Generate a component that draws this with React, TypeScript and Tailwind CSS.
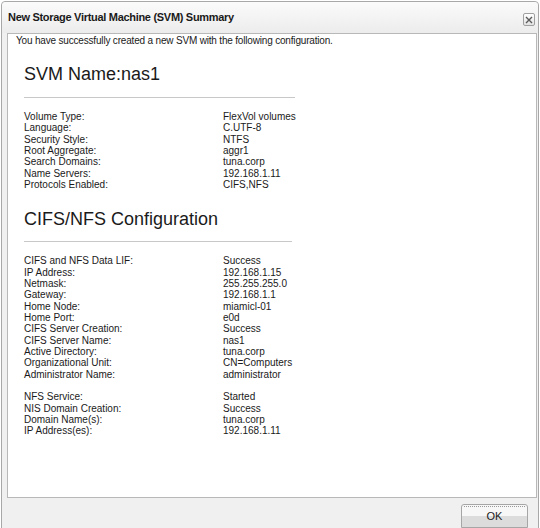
import React from "react";

const sec1: [string, string][] = [
  ["Volume Type:", "FlexVol volumes"],
  ["Language:", "C.UTF-8"],
  ["Security Style:", "NTFS"],
  ["Root Aggregate:", "aggr1"],
  ["Search Domains:", "tuna.corp"],
  ["Name Servers:", "192.168.1.11"],
  ["Protocols Enabled:", "CIFS,NFS"],
];

const sec2: [string, string][] = [
  ["CIFS and NFS Data LIF:", "Success"],
  ["IP Address:", "192.168.1.15"],
  ["Netmask:", "255.255.255.0"],
  ["Gateway:", "192.168.1.1"],
  ["Home Node:", "miamicl-01"],
  ["Home Port:", "e0d"],
  ["CIFS Server Creation:", "Success"],
  ["CIFS Server Name:", "nas1"],
  ["Active Directory:", "tuna.corp"],
  ["Organizational Unit:", "CN=Computers"],
  ["Administrator Name:", "administrator"],
  ["", ""],
  ["NFS Service:", "Started"],
  ["NIS Domain Creation:", "Success"],
  ["Domain Name(s):", "tuna.corp"],
  ["IP Address(es):", "192.168.1.11"],
];

function Rows({ rows }: { rows: [string, string][] }) {
  return (
    <div className="grid grid-cols-[199px_1fr] text-[10px] leading-[11.33px] text-[#1a1a1a]">
      {rows.map(([k, v], i) => (
        <React.Fragment key={i}>
          <div className="h-[11.33px] whitespace-nowrap">{k}</div>
          <div className="h-[11.33px] whitespace-nowrap">{v}</div>
        </React.Fragment>
      ))}
    </div>
  );
}

export default function App() {
  return (
    <div className="w-[540px] h-[528px] bg-white overflow-hidden font-['Liberation_Sans',Arial,sans-serif]">
      <div className="ml-px mt-px w-[538px] h-[528px] border border-[#a8a8a8] rounded-t-[4px] bg-[#f0f0f0] flex flex-col">
        <div className="h-[31px] shrink-0 flex items-center justify-between pl-[6px] pr-[3px] bg-gradient-to-b from-[#fbfbfb] to-[#ececec] rounded-t-[4px]">
          <div className="text-[11px] font-bold text-[#1a1a1a] leading-none tracking-[-0.3px]">
            New Storage Virtual Machine (SVM) Summary
          </div>
          <div className="w-[12px] h-[13px] mt-[4px] border border-[#a0a0a0] rounded-[2px] bg-gradient-to-b from-white to-[#e2e2e2] flex items-center justify-center">
            <svg width="8" height="8" viewBox="0 0 8 8">
              <path d="M1 1 L7 7 M7 1 L1 7" stroke="#5a5a5a" strokeWidth="1.4" />
            </svg>
          </div>
        </div>
        <div className="ml-[5px] mr-[1px] h-[465px] shrink-0 border border-[#b8b8b8] bg-white pl-[8px] pt-px">
          <div className="text-[10px] leading-[12px] text-[#1a1a1a] tracking-[-0.18px]">
            You have successfully created a new SVM with the following configuration.
          </div>
          <div className="pl-[8px]">
            <div className="mt-[17px] text-[18px] leading-[20px] text-[#1a1a1a]">SVM Name:nas1</div>
            <div className="mt-[13px] w-[271px] h-px bg-[#c8c8c8]" />
            <div className="mt-[13px]">
              <Rows rows={sec1} />
            </div>
            <div className="mt-[19px] text-[18px] leading-[20px] text-[#1a1a1a]">CIFS/NFS Configuration</div>
            <div className="mt-[12px] w-[268px] h-px bg-[#c8c8c8]" />
            <div className="mt-[13px]">
              <Rows rows={sec2} />
            </div>
          </div>
        </div>
        <div className="flex justify-end pr-[10px] pt-[6px]">
          <div className="relative w-[67px] h-[24px] border border-[#a6a6a6] rounded-t-[3px] bg-gradient-to-b from-[#f7f7f7] from-50% to-[#dcdcdc] to-50% flex items-center justify-center text-[11px] text-[#1a1a1a]">
            <div className="absolute left-[2px] right-[2px] top-[1px] border-t border-dotted border-[#9a9a9a]" />
            OK
          </div>
        </div>
      </div>
    </div>
  );
}
